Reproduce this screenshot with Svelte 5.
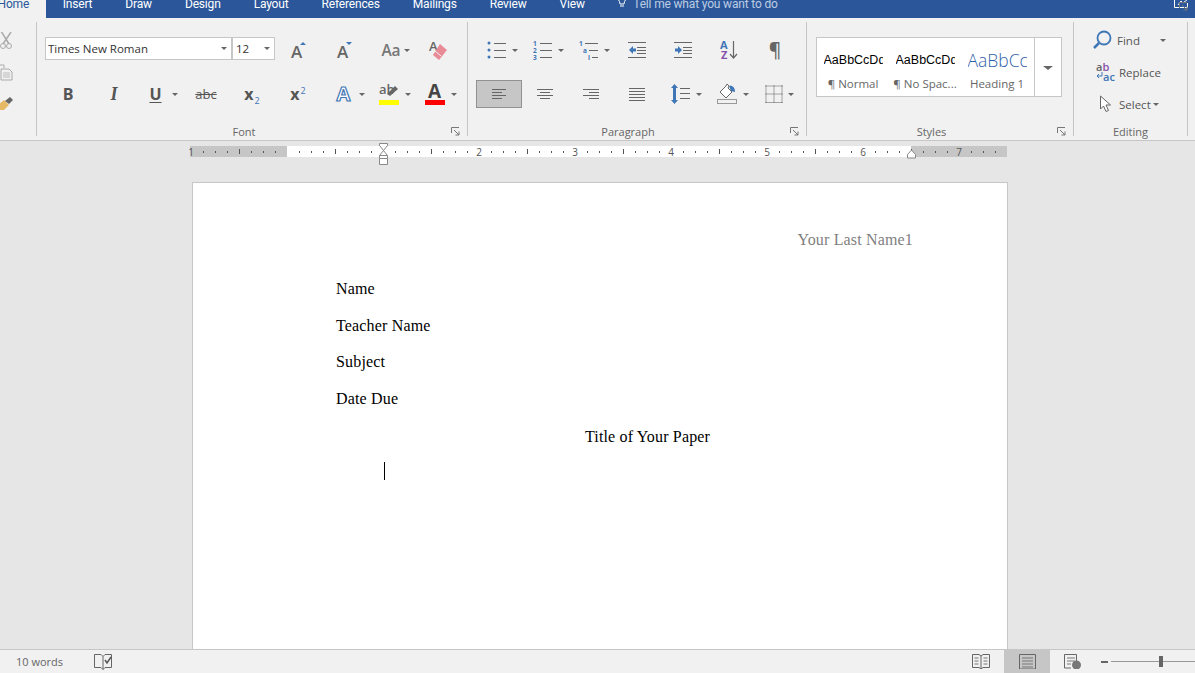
<script>
	const tabs = ['Insert', 'Draw', 'Design', 'Layout', 'References', 'Mailings', 'Review', 'View'];
	const inches = [[-1, '1'], [2, '2'], [3, '3'], [4, '4'], [5, '5'], [6, '6'], [7, '7']];
	// ruler ticks every 1/8 inch, origin sits at the left page margin
	const ticks = [];
	for (let i = -7; i <= 60; i++) {
		if (i % 8 !== 0) ticks.push(i);
	}
	const ZERO = 102;
</script>

{#snippet launcher()}
	<svg class="launch" width="9" height="9" viewBox="0 0 9 9">
		<path d="M.5 6V.5H8M3 3l5 5M8 4.500V8H4.500" fill="none" stroke="#777" />
	</svg>
{/snippet}

{#snippet lines(x, w, ys)}
	{#each ys as y}
		<rect {x} {y} width={w} height="1" fill="#666" />
	{/each}
{/snippet}

<div class="app">
	<header class="tabbar">
		<span class="tab home">Home</span>
		{#each tabs as tab}
			<span class="tab">{tab}</span>
		{/each}
		<span class="tell">
			<svg width="12" height="14" viewBox="0 0 12 14">
				<path d="M1 0c0 4 3 4 3 8h4c0-4 3-4 3-8M4 10h4" fill="none" stroke="#fff" />
			</svg>
			Tell me what you want to do
		</span>
		<svg class="share" width="16" height="10" viewBox="0 0 16 10">
			<path d="M.5 0v8.500h13V4M4 6l3-4 2 2 5-4" fill="none" stroke="#fff" />
		</svg>
	</header>

	<section class="ribbon">
		<div class="group clip">
			<div class="clip-icons">
				<svg width="13" height="17" viewBox="0 0 13 17">
					<path d="M1-1l8 13M11 0L3 12" stroke="#aaa" stroke-width="1.500" fill="none" />
					<circle cx="3" cy="14" r="2.500" fill="none" stroke="#aaa" />
					<circle cx="9" cy="14" r="2.500" fill="none" stroke="#aaa" />
				</svg>
				<svg width="13" height="17" viewBox="0 0 13 17">
					<path d="M-2 1h6v3M1 5h8l3 3v8H1z" fill="#f1f1f1" stroke="#aaa" />
					<path d="M3 9h7M3 11h7M3 13h7" stroke="#bbb" />
				</svg>
				<svg width="14" height="15" viewBox="0 0 14 15">
					<path d="M-2 9l6-5 5 5-5 5h-6z" fill="#e8b964" />
					<path d="M5 5l5-4 3 3-4 4z" fill="#666" />
				</svg>
			</div>
			<div class="launch-row">{@render launcher()}</div>
		</div>

		<div class="group font">
			<div class="row top">
				<div class="combo face"><span>Times New Roman</span><i class="caret"></i></div>
				<div class="combo size"><span>12</span><i class="caret"></i></div>
				<button class="btn">
					<svg width="20" height="20" viewBox="0 0 20 20">
						<text x="3" y="18" class="glyph" font-size="17">A</text>
						<path d="M12 5l3-3 3 3z" fill="#3f76b5" />
					</svg>
				</button>
				<button class="btn">
					<svg width="20" height="20" viewBox="0 0 20 20">
						<text x="3" y="18" class="glyph" font-size="17">A</text>
						<path d="M12 2l3 3 3-3z" fill="#3f76b5" />
					</svg>
				</button>
				<button class="btn aa-btn"><span class="aa">Aa</span><i class="caret"></i></button>
				<button class="btn nudge">
					<svg width="20" height="20" viewBox="0 0 20 20">
						<text x="0" y="11" class="glyph" font-size="13">A</text>
						<path d="M11 4l7 6-8 10-6-5z" fill="#e98a97" />
						<path d="M6 11l6 5" stroke="#f1f1f1" />
					</svg>
				</button>
			</div>
			<div class="row">
				<button class="btn fmt"><b>B</b></button>
				<button class="btn fmt"><b class="serif"><i>I</i></b></button>
				<button class="btn fmt under-btn"><b class="under">U</b><i class="caret"></i></button>
				<button class="btn fmt"><span class="strike">abc</span></button>
				<button class="btn fmt"><span><b>x</b><sub>2</sub></span></button>
				<button class="btn fmt"><span><b>x</b><sup>2</sup></span></button>
				<button class="btn wide">
					<svg width="22" height="22" viewBox="0 0 22 22">
						<text x="4.500" y="18" font-size="20" font-weight="700" font-family="Open Sans" fill="#fff" stroke="#3f76b5" stroke-width="1.200">A</text>
					</svg>
					<i class="caret"></i>
				</button>
				<button class="btn wide">
					<svg width="22" height="24" viewBox="0 0 22 24">
						<text x="1" y="12" class="glyph" font-size="13">ab</text>
						<path d="M9 12l8-8 3 3-8 7z" fill="#666" />
						<rect x="1" y="18" width="20" height="5" fill="#ff0" />
					</svg>
					<i class="caret"></i>
				</button>
				<button class="btn wide">
					<svg width="22" height="24" viewBox="0 0 22 24">
						<text x="4" y="16" font-size="19" font-weight="700" font-family="Open Sans" fill="#444">A</text>
						<rect x="1" y="18" width="20" height="5" fill="#f00" />
					</svg>
					<i class="caret"></i>
				</button>
			</div>
			<div class="label">Font{@render launcher()}</div>
		</div>

		<div class="group para">
			<div class="row top">
				<button class="btn nudge">
					<svg width="20" height="18" viewBox="0 0 20 18">
						<circle cx="2" cy="2" r="1.500" fill="#3f76b5" /><circle cx="2" cy="9" r="1.500" fill="#3f76b5" /><circle cx="2" cy="16" r="1.500" fill="#3f76b5" />
						{@render lines(7, 12, [2, 9, 16])}
					</svg>
					<i class="caret"></i>
				</button>
				<button class="btn nudge">
					<svg width="20" height="20" viewBox="0 0 20 20">
						<text x="0" y="6" class="num">1</text><text x="0" y="13" class="num">2</text><text x="0" y="20" class="num">3</text>
						{@render lines(7, 12, [3, 10, 17])}
					</svg>
					<i class="caret"></i>
				</button>
				<button class="btn nudge">
					<svg width="20" height="20" viewBox="0 0 20 20">
						<text x="0" y="6" class="num">1</text><text x="4" y="13" class="num">a</text><text x="9" y="20" class="num">i</text>
						{@render lines(6, 13, [3])}{@render lines(10, 9, [10])}{@render lines(13, 6, [17])}
					</svg>
					<i class="caret"></i>
				</button>
				<button class="btn">
					<svg width="18" height="16" viewBox="0 0 18 16">
						{@render lines(0, 18, [0, 15])}{@render lines(9, 9, [5, 8, 11])}
						<path d="M1 8l4-4v2.500h3v3H5V12z" fill="#3f76b5" />
					</svg>
				</button>
				<button class="btn">
					<svg width="18" height="16" viewBox="0 0 18 16">
						{@render lines(0, 18, [0, 15])}{@render lines(9, 9, [5, 8, 11])}
						<path d="M8 8L4 4v2.500H1v3h3V12z" fill="#3f76b5" />
					</svg>
				</button>
				<button class="btn">
					<svg width="18" height="20" viewBox="0 0 18 20">
						<text x="0" y="9" font-size="11" font-weight="700" font-family="Open Sans" fill="#3f76b5">A</text>
						<text x="1" y="19" font-size="11" font-weight="700" font-family="Open Sans" fill="#8550a8">Z</text>
						<path d="M13.500 1v17M10 14l3.500 4 3.500-4" fill="none" stroke="#666" stroke-width="1.200" />
					</svg>
				</button>
				<button class="btn"><span class="pilcrow">¶</span></button>
			</div>
			<div class="row">
				<button class="btn on">
					<svg width="16" height="11" viewBox="0 0 16 11">{@render lines(1, 14, [0, 6])}{@render lines(1, 10, [3, 9])}</svg>
				</button>
				<button class="btn">
					<svg width="16" height="11" viewBox="0 0 16 11">{@render lines(0, 16, [0, 6])}{@render lines(3, 10, [3, 9])}</svg>
				</button>
				<button class="btn">
					<svg width="16" height="11" viewBox="0 0 16 11">{@render lines(0, 16, [0, 6])}{@render lines(6, 10, [3, 9])}</svg>
				</button>
				<button class="btn">
					<svg width="16" height="13" viewBox="0 0 16 13">{@render lines(0, 16, [0, 3, 6, 9, 12])}</svg>
				</button>
				<button class="btn nudge">
					<svg width="20" height="20" viewBox="0 0 20 20">
						<path d="M3.500 0L7 4H5v12h2l-3.500 4L0 16h2V4H0z" fill="#3f76b5" />
						{@render lines(9, 10, [4, 9, 14])}
					</svg>
					<i class="caret"></i>
				</button>
				<button class="btn wide">
					<svg width="21" height="20" viewBox="0 0 21 20">
						<path d="M10 0l2 2-1 2 4 4-6 6-6-6 6-6z" fill="#fff" stroke="#666" />
						<path d="M12 2c3-1 6 1 6 6l-4-1z" fill="#3f76b5" />
						<rect x=".5" y="15.500" width="19" height="4" fill="#f1f1f1" stroke="#999" />
					</svg>
					<i class="caret"></i>
				</button>
				<button class="btn wide">
					<svg width="18" height="18" viewBox="0 0 18 18">
						<path d="M.5 1h17M.5 9h17M.5 17.500h17M1 .5v17M9 .5v17M17 .5v17" fill="none" stroke="#555" stroke-dasharray="1 1" />
					</svg>
					<i class="caret"></i>
				</button>
			</div>
			<div class="label">Paragraph{@render launcher()}</div>
		</div>

		<div class="group styles">
			<div class="gallery">
				<div class="style"><span class="sample">AaBbCcDdEe</span><span class="style-name">¶ Normal</span></div>
				<div class="style"><span class="sample">AaBbCcDdEe</span><span class="style-name">¶ No Spac...</span></div>
				<div class="style"><span class="sample head">AaBbCcDd</span><span class="style-name">Heading 1</span></div>
				<div class="more"><i class="caret big"></i></div>
			</div>
			<div class="label">Styles{@render launcher()}</div>
		</div>

		<div class="group editing">
			<div class="edit-list">
				<div class="edit find">
					<svg width="20" height="20" viewBox="0 0 20 20">
						<circle cx="12" cy="8" r="6.500" fill="none" stroke="#3f76b5" stroke-width="1.800" />
						<path d="M7 13l-5 5" stroke="#3f76b5" stroke-width="2.500" />
					</svg>
					<span>Find</span><i class="caret"></i>
				</div>
				<div class="edit replace">
					<svg width="21" height="20" viewBox="0 0 21 20">
						<text x="1" y="9" font-size="11" font-family="Open Sans" font-weight="600" fill="#666">a<tspan fill="#8550a8">b</tspan></text>
						<text x="8" y="19" font-size="11" font-family="Open Sans" font-weight="600" fill="#3f76b5">ac</text>
						<path d="M7 10v4H2M4 12l-2 2 2 2" fill="none" stroke="#3f76b5" />
					</svg>
					<span>Replace</span>
				</div>
				<div class="edit select">
					<svg width="13" height="18" viewBox="0 0 13 18">
						<path d="M1.500 1v13l3-3 2.500 5.500 2.500-1-2.500-5.500h4.500z" fill="#fff" stroke="#666" />
					</svg>
					<span>Select</span><i class="caret"></i>
				</div>
			</div>
			<div class="label">Editing</div>
		</div>
	</section>

	<main class="docarea">
		<svg class="ruler" width="830" height="25" viewBox="0 0 830 25">
			<rect x="5" y="5" width="817" height="11" fill="#fff" />
			<rect x="5" y="5" width="97" height="11" fill="#c6c6c6" />
			<rect x="726" y="5" width="96" height="11" fill="#c6c6c6" />
			{#each ticks as t}
				<rect x={ZERO + t * 12} y={t % 4 === 0 ? 8 : 10} width="1" height={t % 4 === 0 ? 5 : 2} fill={t * 12 + ZERO > 5 && t * 12 + ZERO < 821 ? '#555' : 'transparent'} />
			{/each}
			{#each inches as [n, label]}
				<text x={ZERO + n * 96} y="14.500" text-anchor="middle" font-size="10" font-family="Open Sans" fill="#555">{label}</text>
			{/each}
			<path d="M194.500 2.500h8v2l-4 5 4 5v3h-8v-3l4-5-4-5z" fill="#fff" stroke="#888" />
			<path d="M194.500 14.500h8M194.500 17.500h8v6h-8z" fill="#fff" stroke="#888" />
			<path d="M726.500 9l4 4.500v3.500h-8v-3.500z" fill="#fff" stroke="#888" />
		</svg>

		<article class="page">
			<p class="runhead">Your Last Name1</p>
			<p class="first">Name</p>
			<p>Teacher Name</p>
			<p>Subject</p>
			<p>Date Due</p>
			<p class="title">Title of Your Paper</p>
			<div class="cursor"></div>
		</article>
	</main>

	<footer class="status">
		<span class="words">10 words</span>
		<svg class="proof" width="18" height="16" viewBox="0 0 18 16">
			<path d="M9 2.500L7 .5H.5v13H7l2 2 2-2h6.500V.5H11zM9 2.500v13" fill="none" stroke="#666" />
			<path d="M11 6l2 3 4-6" fill="none" stroke="#555" stroke-width="1.500" />
		</svg>
		<div class="views">
			<button class="view">
				<svg width="18" height="15" viewBox="0 0 18 15">
					<path d="M9 2L7 .5H.5v13H7l2 1.500 2-1.500h6.500V.5H11zM9 2v13" fill="none" stroke="#666" />
					<path d="M2.500 4h4M2.500 7h4M2.500 10h4M11.500 4h4M11.500 7h4M11.500 10h4" stroke="#777" />
				</svg>
			</button>
			<button class="view on">
				<svg width="17" height="15" viewBox="0 0 17 15">
					<path d="M.5.500h16V15H.5z" fill="none" stroke="#666" />
					<path d="M3 4h11M3 7h11M3 10h11M3 13h11" stroke="#777" />
				</svg>
			</button>
			<button class="view">
				<svg width="18" height="15" viewBox="0 0 18 15">
					<path d="M.5.500h12V9M.5.500V14H7" fill="none" stroke="#666" />
					<path d="M3 4h8M3 7h8M3 10h4" stroke="#777" />
					<circle cx="12.500" cy="11" r="4.500" fill="#777" />
				</svg>
			</button>
		</div>
		<div class="zoom">
			<span class="minus"></span>
			<div class="slider"><span class="thumb"></span></div>
		</div>
	</footer>
</div>

<style>
	:global(body) {
		margin: 0;
		background: #e6e6e6;
		overflow: hidden;
	}

	.app {
		width: 1195px;
		height: 673px;
		display: flex;
		flex-direction: column;
		overflow: hidden;
		font-family: "Open Sans", "Liberation Sans", sans-serif;
		color: #666;
	}

	button {
		border: 0;
		background: none;
		padding: 0;
		font: inherit;
		color: inherit;
	}

	.caret {
		display: inline-block;
		width: 0;
		height: 0;
		border-style: solid;
		border-width: 3px 3px 0;
		border-color: #666 transparent transparent;
	}

	.caret.big {
		border-width: 4px 5px 0;
	}

	/* title tabs: the top of the text is cut off by the window */
	.tabbar {
		flex: 0 0 18px;
		display: flex;
		background: #2b579a;
		color: #fff;
		font-family: Roboto, sans-serif;
		font-size: 12px;
		letter-spacing: -.17px;
		line-height: 8px;
		overflow: hidden;
		position: relative;
	}

	.tab {
		padding: 0 16.500px;
		white-space: nowrap;
	}

	.tab.home {
		margin-left: -19px;
		background: #f1f1f1;
		color: #2b579a;
		padding-right: 17px;
	}

	.tell {
		display: flex;
		align-items: flex-start;
		gap: 5px;
		margin-left: 15px;
		color: #bccce2;
		white-space: nowrap;
	}

	.tell svg {
		margin-top: -4px;
	}

	.share {
		position: absolute;
		right: 5px;
		top: -1px;
	}

	.ribbon {
		flex: 0 0 123px;
		box-sizing: border-box;
		display: flex;
		padding: 4px 0;
		background: #f1f1f1;
		border-bottom: 1px solid #c6c6c6;
	}

	.group {
		box-sizing: border-box;
		height: 114px;
		flex: none;
		display: flex;
		flex-direction: column;
		border-right: 1px solid #c6c6c6;
	}

	.clip { width: 37px; }
	.font { width: 431px; padding-left: 8px; }
	.para { width: 339px; padding-left: 8px; }
	.styles { width: 267px; padding-left: 9px; }
	.editing { width: 114px; }

	.font .label { padding-right: 24px; }
	.para .label { padding-right: 26px; }
	.styles .label { padding-right: 26px; }

	.clip-icons {
		margin-top: 10px;
		display: flex;
		flex-direction: column;
		gap: 15px;
	}

	.launch-row {
		margin-top: auto;
		margin-bottom: -1px;
		padding-left: 20px;
		line-height: 0;
	}

	.row {
		display: flex;
		height: 28px;
		margin-top: 10px;
	}

	.row.top {
		height: 40px;
		margin-top: 8px;
		align-items: center;
	}

	.combo {
		box-sizing: border-box;
		height: 23px;
		display: flex;
		align-items: center;
		justify-content: space-between;
		background: #fff;
		border: 1px solid #c6c6c6;
		color: #333;
		font-size: 11.500px;
		padding: 0 4px 0 2px;
		margin-top: -3px;
	}

	.combo.face { width: 187px; }
	.combo.size { width: 43px; padding-right: 4px; padding-left: 3px; }

	.btn {
		flex: 0 0 46px;
		box-sizing: border-box;
		height: 28px;
		display: flex;
		align-items: center;
		justify-content: center;
		gap: 5px;
	}

	.btn.nudge { padding-left: 6px; }
	.btn.wide { gap: 5px; padding-left: 8px; }
	.under-btn { padding-left: 7px; gap: 10px; }
	.aa-btn { padding-left: 11px; gap: 3px; }

	.btn.on {
		background: #c6c6c6;
		border: 1px solid #919191;
	}

	.glyph {
		font-family: "Open Sans", sans-serif;
		font-weight: 600;
		fill: #666;
	}

	.num {
		font-family: "Open Sans", sans-serif;
		font-size: 6.500px;
		font-weight: 700;
		fill: #3f76b5;
	}

	.aa {
		font-size: 15.500px;
		font-weight: 600;
		color: #777;
	}

	.fmt {
		font-size: 16px;
		color: #555;
	}

	.fmt b { font-weight: 700; }
	.fmt .serif { font-family: "Liberation Serif", serif; font-size: 18px; }

	.under {
		text-decoration: underline;
		text-underline-offset: 2px;
	}

	.strike {
		font-size: 13px;
		text-decoration: line-through;
	}

	sub, sup {
		font-size: 9px;
		color: #3f76b5;
		margin-left: 1px;
		line-height: 0;
	}

	.pilcrow {
		font-size: 19px;
		font-weight: 600;
		color: #666;
	}

	.label {
		position: relative;
		margin-top: auto;
		margin-bottom: -3px;
		height: 14px;
		line-height: 14px;
		text-align: center;
		font-size: 11px;
		color: #666;
	}

	.launch {
		position: absolute;
		right: 7px;
		top: 2px;
	}

	.gallery {
		box-sizing: border-box;
		width: 246px;
		height: 60px;
		margin-top: 15px;
		display: flex;
		background: #fff;
		border: 1px solid #c6c6c6;
	}

	.style {
		width: 72px;
		display: flex;
		flex-direction: column;
		align-items: center;
		padding-top: 12px;
		box-sizing: border-box;
	}

	.sample {
		display: block;
		width: 59px;
		height: 20px;
		overflow: hidden;
		white-space: nowrap;
		font-family: "Liberation Sans", sans-serif;
		font-size: 12.500px;
		line-height: 20px;
		color: #000;
	}

	.sample.head {
		font-size: 17.500px;
		color: #2f5fa8;
		font-family: "Open Sans", sans-serif;
		font-weight: 300;
	}

	.style-name {
		margin-top: 6px;
		font-size: 11.500px;
		line-height: 16px;
		white-space: nowrap;
	}

	.more {
		flex: 1;
		display: flex;
		align-items: center;
		justify-content: center;
		border-left: 1px solid #c6c6c6;
		margin-left: 1px;
		padding-top: 2px;
	}

	.edit-list {
		display: flex;
		flex-direction: column;
		font-size: 11.500px;
		margin-top: 2px;
		color: #555;
	}

	.edit {
		height: 32px;
		display: flex;
		align-items: center;
	}

	.find { padding-left: 18px; gap: 5px; }
	.find .caret { margin-left: 15px; }
	.replace { padding-left: 21px; gap: 3px; }
	.select { padding-left: 25px; gap: 7px; }
	.select .caret { margin-left: -5px; }

	.docarea {
		flex: 1;
		min-height: 0;
		overflow: hidden;
		background: #e6e6e6;
	}

	.ruler {
		display: block;
		margin: 0 0 0 185px;
	}

	.page {
		box-sizing: border-box;
		width: 816px;
		height: 700px;
		margin: 16px 0 0 192px;
		padding: 48px 48px 0 143px;
		background: #fff;
		border: 1px solid #c6c6c6;
		font-family: "Liberation Serif", serif;
		font-size: 16px;
		letter-spacing: .16px;
		line-height: 18px;
		color: #000;
	}

	.page p {
		margin: 0 0 18.600px;
	}

	.page .runhead {
		color: #7f7f7f;
		text-align: right;
		padding-right: 46px;
		margin-bottom: 31px;
	}

	.page .title {
		text-align: center;
		margin-top: 20.600px;
		margin-bottom: 16px;
	}

	.cursor {
		width: 1px;
		height: 18px;
		margin-left: 48px;
		background: #000;
	}

	.status {
		flex: 0 0 24px;
		box-sizing: border-box;
		display: flex;
		align-items: center;
		background: #f1f1f1;
		border-top: 1px solid #c6c6c6;
		font-size: 11px;
	}

	.words { margin-left: 16px; width: 78px; }

	.views {
		display: flex;
		margin-left: auto;
		height: 100%;
	}

	.view {
		width: 46px;
		display: flex;
		align-items: center;
		justify-content: center;
	}

	.view.on { background: #c6c6c6; }

	.zoom {
		display: flex;
		align-items: center;
		width: 99px;
	}

	.minus {
		width: 7px;
		height: 2px;
		margin: 0 3px 0 5px;
		background: #666;
	}

	.slider {
		flex: 1;
		height: 1px;
		background: #999;
		position: relative;
	}

	.thumb {
		position: absolute;
		left: 48px;
		top: -5px;
		width: 4px;
		height: 11px;
		background: #666;
	}
</style>
